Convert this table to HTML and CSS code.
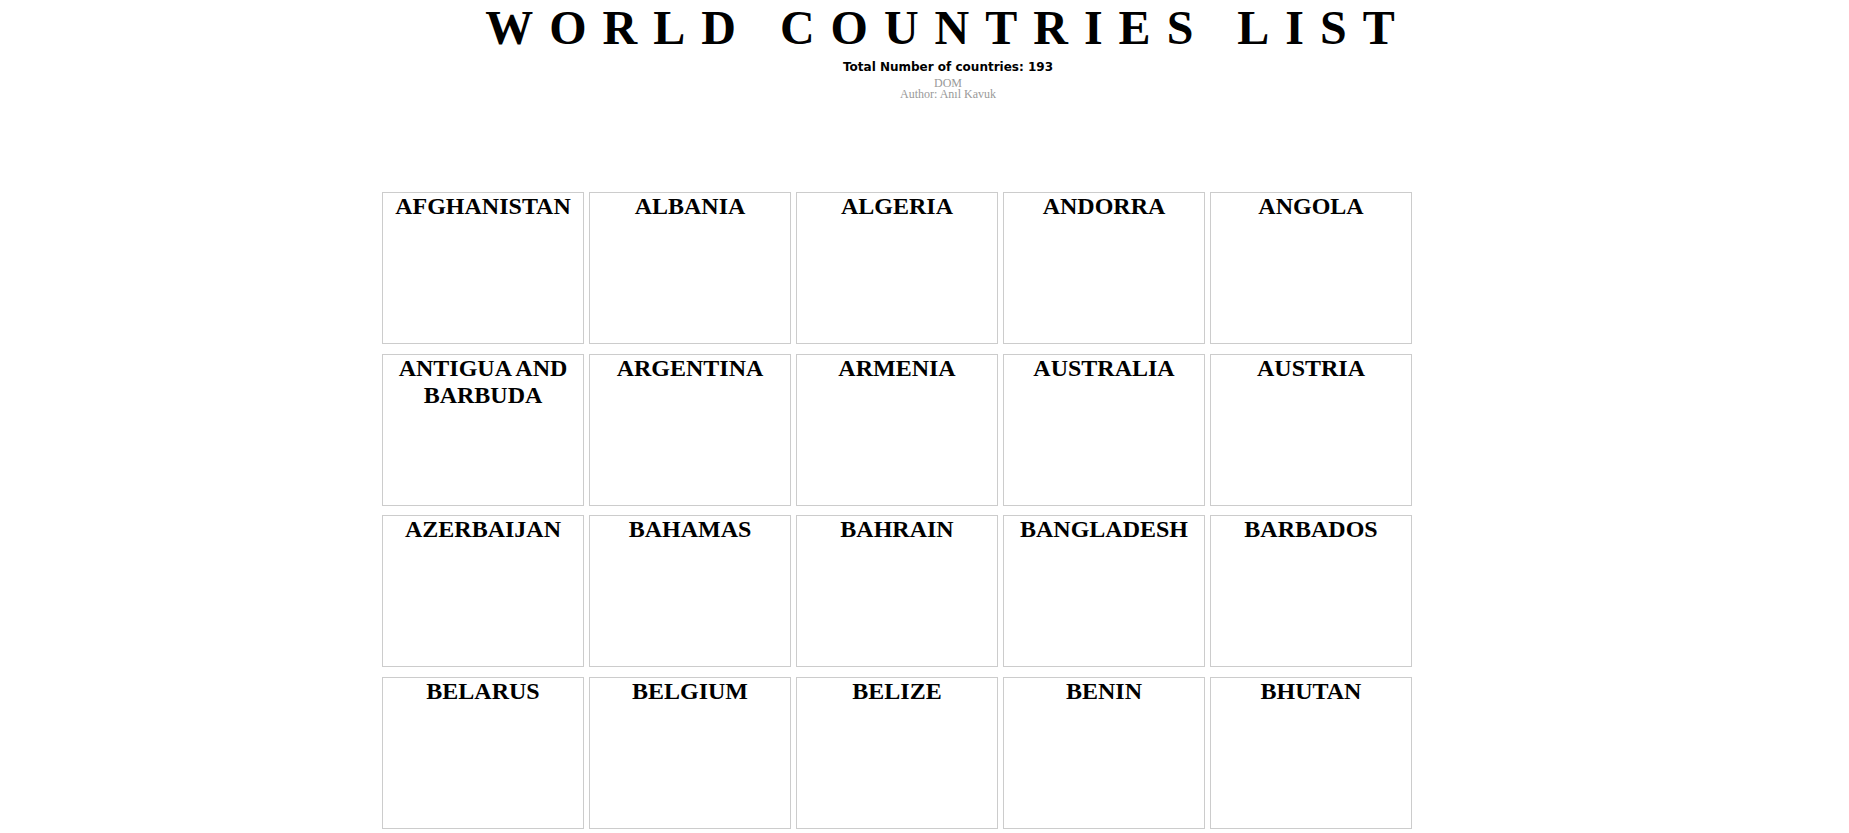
FILE: index.html
```html
<!DOCTYPE html>
<html>
<head>
<meta charset="utf-8">
<title>World Countries List</title>
<link rel="stylesheet" href="styles.css">
</head>
<body>
<header class="header">
  <h1 class="title">WORLD COUNTRIES LIST</h1>
  <p class="total">Total Number of countries: 193</p>
  <p class="sub">DOM</p>
  <p class="sub">Author: Anıl Kavuk</p>
</header>
<main class="grid">
  <div class="card"><h2 class="name">AFGHANISTAN</h2></div>
  <div class="card"><h2 class="name">ALBANIA</h2></div>
  <div class="card"><h2 class="name">ALGERIA</h2></div>
  <div class="card"><h2 class="name">ANDORRA</h2></div>
  <div class="card"><h2 class="name">ANGOLA</h2></div>
  <div class="card"><h2 class="name">ANTIGUA AND BARBUDA</h2></div>
  <div class="card"><h2 class="name">ARGENTINA</h2></div>
  <div class="card"><h2 class="name">ARMENIA</h2></div>
  <div class="card"><h2 class="name">AUSTRALIA</h2></div>
  <div class="card"><h2 class="name">AUSTRIA</h2></div>
  <div class="card"><h2 class="name">AZERBAIJAN</h2></div>
  <div class="card"><h2 class="name">BAHAMAS</h2></div>
  <div class="card"><h2 class="name">BAHRAIN</h2></div>
  <div class="card"><h2 class="name">BANGLADESH</h2></div>
  <div class="card"><h2 class="name">BARBADOS</h2></div>
  <div class="card"><h2 class="name">BELARUS</h2></div>
  <div class="card"><h2 class="name">BELGIUM</h2></div>
  <div class="card"><h2 class="name">BELIZE</h2></div>
  <div class="card"><h2 class="name">BENIN</h2></div>
  <div class="card"><h2 class="name">BHUTAN</h2></div>
</main>
</body>
</html>
```

FILE: styles.css
```css
html, body {
  margin: 0;
  padding: 0;
  background: #fff;
}

body {
  font-family: "Liberation Serif", "Times New Roman", serif;
  color: #000;
}

.header {
  display: flex;
  flex-direction: column;
  align-items: center;
  padding-left: 47px;
}

.title {
  margin: 0;
  font-size: 48px;
  font-weight: bold;
  letter-spacing: 16px;
  line-height: normal;
}

.total {
  margin: 5px 0 4px;
  font-family: "DejaVu Sans", Verdana, sans-serif;
  font-weight: bold;
  font-size: 12px;
  line-height: 14px;
}

.sub {
  margin: 0;
  font-size: 12px;
  line-height: 11px;
  color: #999;
}

.grid {
  display: flex;
  flex-wrap: wrap;
  gap: 9.5px 5px;
  width: 1030px;
  margin: 92px 0 0 382px;
}

.card {
  box-sizing: content-box;
  width: 200px;
  height: 150px;
  border: 1px solid #ccc;
}

.name {
  margin: 0;
  font-size: 24px;
  font-weight: bold;
  text-align: center;
  line-height: normal;
}
```
